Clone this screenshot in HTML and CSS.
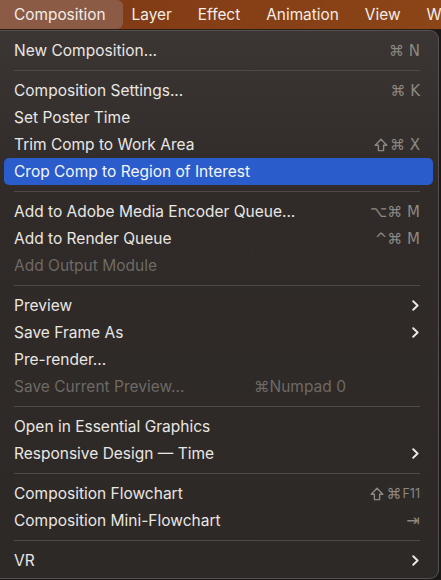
FILE: index.html
```html
<!DOCTYPE html>
<html>
<head>
<meta charset="utf-8">
<link rel="stylesheet" href="styles.css">
</head>
<body>
<div class="menubar">
  <span class="mb-item mb-active">Composition</span>
  <span class="mb-item">Layer</span>
  <span class="mb-item">Effect</span>
  <span class="mb-item">Animation</span>
  <span class="mb-item">View</span>
  <span class="mb-item">W</span>
</div>
<div class="menu">
  <div class="row"><span>New Composition...</span><span class="sc">⌘ N</span></div>
  <div class="sep"></div>
  <div class="row"><span>Composition Settings...</span><span class="sc">⌘ K</span></div>
  <div class="row"><span>Set Poster Time</span></div>
  <div class="row"><span>Trim Comp to Work Area</span><span class="sc"><svg class="sh" viewBox="0 0 14 14" width="14" height="14"><path d="M7 1.2 L12.8 7.2 H9.6 V12.6 H4.4 V7.2 H1.2 Z" fill="none" stroke="#8c8884" stroke-width="1.4" stroke-linejoin="round"/></svg>⌘ X</span></div>
  <div class="row hl"><span>Crop Comp to Region of Interest</span></div>
  <div class="sep"></div>
  <div class="row"><span>Add to Adobe Media Encoder Queue...</span><span class="sc">⌥⌘ M</span></div>
  <div class="row"><span>Add to Render Queue</span><span class="sc">^⌘ M</span></div>
  <div class="row dis"><span>Add Output Module</span></div>
  <div class="sep"></div>
  <div class="row"><span>Preview</span><svg class="chev" viewBox="0 0 7 11" width="7" height="11"><polyline points="1.2,1.2 5.6,5.5 1.2,9.8" fill="none" stroke="#ebe8e5" stroke-width="1.9" stroke-linecap="round" stroke-linejoin="round"/></svg></div>
  <div class="row"><span>Save Frame As</span><svg class="chev" viewBox="0 0 7 11" width="7" height="11"><polyline points="1.2,1.2 5.6,5.5 1.2,9.8" fill="none" stroke="#ebe8e5" stroke-width="1.9" stroke-linecap="round" stroke-linejoin="round"/></svg></div>
  <div class="row"><span>Pre-render...</span></div>
  <div class="row dis"><span class="lbl-fixed">Save Current Preview...</span><span class="np">⌘Numpad 0</span></div>
  <div class="sep"></div>
  <div class="row"><span>Open in Essential Graphics</span></div>
  <div class="row"><span>Responsive Design — Time</span><svg class="chev" viewBox="0 0 7 11" width="7" height="11"><polyline points="1.2,1.2 5.6,5.5 1.2,9.8" fill="none" stroke="#ebe8e5" stroke-width="1.9" stroke-linecap="round" stroke-linejoin="round"/></svg></div>
  <div class="sep"></div>
  <div class="row"><span>Composition Flowchart</span><span class="sc"><svg class="sh" viewBox="0 0 14 14" width="14" height="14"><path d="M7 1.2 L12.8 7.2 H9.6 V12.6 H4.4 V7.2 H1.2 Z" fill="none" stroke="#8c8884" stroke-width="1.4" stroke-linejoin="round"/></svg>⌘<small>F11</small></span></div>
  <div class="row"><span>Composition Mini-Flowchart</span><span class="sc tab">⇥</span></div>
  <div class="sep"></div>
  <div class="row"><span>VR</span><svg class="chev" viewBox="0 0 7 11" width="7" height="11"><polyline points="1.2,1.2 5.6,5.5 1.2,9.8" fill="none" stroke="#ebe8e5" stroke-width="1.9" stroke-linecap="round" stroke-linejoin="round"/></svg></div>
</div>
</body>
</html>
```
FILE: styles.css
```css
html, body {
  margin: 0;
  padding: 0;
}
body {
  width: 441px;
  height: 580px;
  overflow: hidden;
  background: #1b1918;
  font-family: Inter, "Noto Sans", sans-serif;
  color: #e9e6e3;
}
.menubar {
  height: 29px;
  display: flex;
  align-items: center;
  background: linear-gradient(90deg, #7a3a1a 0%, #843d15 40%, #8c4517 100%);
  border-bottom: 1px solid #2a1c14;
  font-size: 15.4px;
  color: #f2ece8;
  white-space: nowrap;
  overflow: hidden;
}
.mb-item {
  padding: 0 13px;
  line-height: 29px;
}
.mb-item:first-child {
  padding-left: 14px;
}
.mb-active {
  background: #8c5b46;
  border-radius: 0 6px 6px 0;
  padding-right: 17px;
  margin-right: -4px;
}
.menu {
  margin: 0 2px 0 -10px;
  padding: 6px 5px 4px 14px;
  background: linear-gradient(180deg, #3b3633 0%, #302b28 30%, #2d2926 100%);
  border: 1px solid #56514e;
  border-left: none;
  border-radius: 0 9px 9px 0;
  font-size: 15.5px;
}
.row {
  height: 27px;
  display: flex;
  align-items: center;
  justify-content: space-between;
  padding: 0 13px 0 10px;
  border-radius: 5px;
}
.hl {
  background: #2b5ccb;
  color: #f4f6fb;
}
.dis {
  color: #6e6965;
}
.sc {
  color: #8c8884;
  font-family: "DejaVu Sans", Inter, sans-serif;
  font-size: 15px;
  display: flex;
  align-items: center;
}
.sh {
  display: block;
  margin-right: 2px;
}
.sc small {
  font-family: Inter, sans-serif;
  font-size: 12.5px;
  margin-left: 1px;
}
.tab {
  font-size: 16px;
}
.chev {
  display: block;
  margin-right: 1px;
}
.lbl-fixed {
  width: 240px;
}
.np {
  color: #6e6965;
  margin-right: auto;
}
.sep {
  height: 1px;
  background: #4f4a47;
  margin: 6px 13px 6px 10px;
}
```
